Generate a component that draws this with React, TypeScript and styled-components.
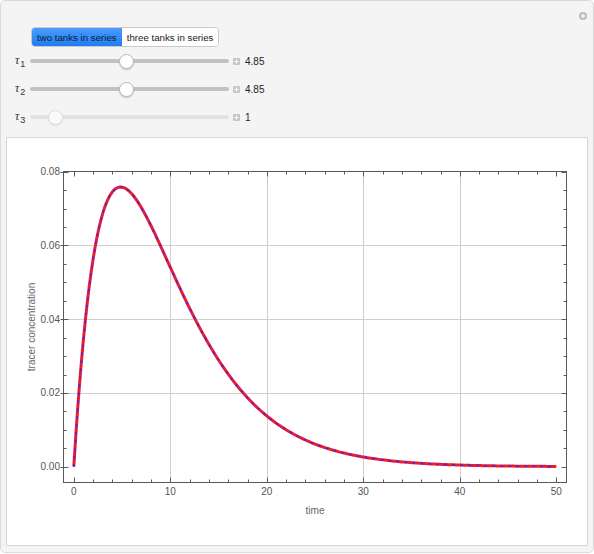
import React, { useState } from 'react';
import styled, { createGlobalStyle } from 'styled-components';

const GlobalStyle = createGlobalStyle`
  html, body {
    margin: 0;
    padding: 0;
    background: #ffffff;
  }
  body {
    font-family: "Liberation Sans", Arial, sans-serif;
  }
`;

const Outer = styled.div`
  position: relative;
  box-sizing: border-box;
  width: 594px;
  height: 553px;
  border: 1px solid #dadada;
  border-radius: 5px;
  background: #f4f4f4;
  display: flex;
  flex-direction: column;
`;

const Controls = styled.div`
  display: flex;
  flex-direction: column;
  padding-top: 26px;
`;

const TabBar = styled.div`
  display: inline-flex;
  align-self: flex-start;
  margin-left: 30px;
  height: 18px;
  border: 1px solid #c9c9c9;
  border-radius: 4px;
  overflow: hidden;
  background: #ffffff;
`;

const Tab = styled.button<{ $active: boolean }>`
  display: flex;
  align-items: center;
  border: none;
  margin: 0;
  padding: 0 5px;
  height: 100%;
  font-family: "Liberation Sans", Arial, sans-serif;
  font-size: 9.7px;
  color: ${(p) => (p.$active ? '#10203a' : '#1a1a1a')};
  background: ${(p) => (p.$active ? 'linear-gradient(180deg, #4a9cfb 0%, #1f7cf2 100%)' : '#ffffff')};
  cursor: pointer;
`;

const SliderRow = styled.div`
  display: flex;
  align-items: center;
  height: 28px;
`;

const TauLabel = styled.div`
  width: 29px;
  box-sizing: border-box;
  padding-left: 14px;
  font-family: "Liberation Serif", "Times New Roman", serif;
  font-style: italic;
  font-size: 12px;
  color: #333;
  sub {
    font-style: normal;
    font-family: "Liberation Sans", Arial, sans-serif;
    font-size: 9px;
    vertical-align: -3px;
    margin-left: 1px;
  }
`;

const Track = styled.div<{ $disabled?: boolean }>`
  position: relative;
  width: 199px;
  height: 4px;
  border-radius: 2px;
  background: ${(p) => (p.$disabled ? '#e2e2e2' : '#c2c2c2')};
`;

const Thumb = styled.div<{ $disabled?: boolean }>`
  position: absolute;
  top: 50%;
  width: 15px;
  height: 15px;
  margin-left: -7.5px;
  margin-top: -7.5px;
  box-sizing: border-box;
  border-radius: 50%;
  background: ${(p) => (p.$disabled ? '#fafafa' : '#ffffff')};
  border: 1px solid ${(p) => (p.$disabled ? '#dcdcdc' : '#b9b9b9')};
  box-shadow: 0 1px 1.5px rgba(0, 0, 0, ${(p) => (p.$disabled ? 0.08 : 0.2)});
`;

const PlusBox = styled.div`
  width: 7px;
  height: 7px;
  margin-left: 4px;
  display: flex;
  svg {
    display: block;
  }
`;

const Value = styled.div`
  margin-left: 5px;
  font-size: 10px;
  color: #222;
`;

const CornerButton = styled.div`
  position: absolute;
  top: 11px;
  right: 6px;
  width: 8px;
  height: 8px;
  svg {
    display: block;
  }
`;

const PlotPanel = styled.div`
  margin: 6px 5px 0 5px;
  width: 582px;
  height: 409px;
  box-sizing: border-box;
  border: 1px solid #d6d6d6;
  background: #ffffff;
  svg {
    display: block;
  }
`;

// plot geometry (inside the white panel)
const X0 = 66.8;
const XS = 9.65;
const Y0 = 328.7;
const YS = 3687.5;
const FL = 56.5;
const FR = 559.5;
const FT = 33.5;
const FB = 344.5;

const px = (t: number) => X0 + t * XS;
const py = (c: number) => Y0 - c * YS;

function response(t: number, tau1: number, tau2: number) {
  if (Math.abs(tau1 - tau2) < 1e-9) return (t / (tau1 * tau1)) * Math.exp(-t / tau1);
  return (Math.exp(-t / tau1) - Math.exp(-t / tau2)) / (tau1 - tau2);
}

function Plot({ tau1, tau2 }: { tau1: number; tau2: number }) {
  const pts: string[] = [];
  for (let t = 0; t <= 50.0001; t += 0.2) {
    pts.push(`${px(t).toFixed(2)},${py(response(t, tau1, tau2)).toFixed(2)}`);
  }
  const d = 'M' + pts.join(' L');

  const axis = '#5a5a5a';
  const grid = '#cfcfcf';
  const lines: JSX.Element[] = [];

  // gridlines
  [10, 20, 30, 40].forEach((t) => {
    const x = Math.round(px(t)) + 0.5;
    lines.push(<line key={'gx' + t} x1={x} x2={x} y1={FT} y2={FB} stroke={grid} />);
  });
  [0.02, 0.04, 0.06].forEach((c) => {
    const y = Math.round(py(c)) + 0.5;
    lines.push(<line key={'gy' + c} x1={FL} x2={FR} y1={y} y2={y} stroke={grid} />);
  });

  // x ticks
  for (let t = 0; t <= 50; t += 2) {
    const x = Math.round(px(t)) + 0.5;
    const len = t % 10 === 0 ? 5 : 3;
    lines.push(<line key={'bx' + t} x1={x} x2={x} y1={FB} y2={FB - len} stroke={axis} />);
    lines.push(<line key={'tx' + t} x1={x} x2={x} y1={FT} y2={FT + len} stroke={axis} />);
  }
  // y ticks
  for (let i = 0; i <= 16; i++) {
    const c = i * 0.005;
    const y = Math.round(py(c)) + 0.5;
    const major = i % 4 === 0;
    const len = major ? 5 : 3;
    lines.push(
      <line key={'ly' + i} x1={major ? FL - 3 : FL} x2={FL + len} y1={y} y2={y} stroke={axis} />
    );
    lines.push(<line key={'ry' + i} x1={FR} x2={FR - len} y1={y} y2={y} stroke={axis} />);
  }

  return (
    <svg width={580} height={407} viewBox="0 0 580 407">
      {lines}
      <rect x={FL} y={FT} width={FR - FL} height={FB - FT} fill="none" stroke={axis} />
      <path d={d} fill="none" stroke="#ec1c2e" strokeWidth={3} strokeLinejoin="round" />
      <path
        d={d}
        fill="none"
        stroke="#2a2cff"
        strokeWidth={1.6}
        strokeDasharray="2.5 5.5"
        strokeLinejoin="round"
      />
      <g fontFamily='"Liberation Sans", Arial, sans-serif' fontSize={10} fill="#555">
        {[0, 0.02, 0.04, 0.06, 0.08].map((c) => (
          <text key={'yl' + c} x={53} y={py(c) + 3.5} textAnchor="end">
            {c.toFixed(2)}
          </text>
        ))}
        {[0, 10, 20, 30, 40, 50].map((t) => (
          <text key={'xl' + t} x={px(t)} y={357} textAnchor="middle">
            {t}
          </text>
        ))}
        <text x={(FL + FR) / 2} y={376} textAnchor="middle" fill="#666">
          time
        </text>
        <text
          x={0}
          y={0}
          textAnchor="middle"
          fill="#666"
          transform={`translate(28 ${(FT + FB) / 2}) rotate(-90)`}
        >
          tracer concentration
        </text>
      </g>
    </svg>
  );
}

function PlusIcon() {
  return (
    <svg width={7} height={7} viewBox="0 0 7 7">
      <rect x={0} y={0} width={7} height={7} rx={1} fill="#c6c6c6" />
      <path d="M3.5 1.5 V5.5 M1.5 3.5 H5.5" stroke="#ffffff" strokeWidth={1.2} />
    </svg>
  );
}

interface SliderProps {
  index: number;
  value: number;
  disabled?: boolean;
}

function ParamSlider({ index, value, disabled }: SliderProps) {
  const frac = value / 10;
  const left = 7.5 + frac * (199 - 15);
  return (
    <SliderRow>
      <TauLabel>
        τ<sub>{index}</sub>
      </TauLabel>
      <Track $disabled={disabled}>
        <Thumb $disabled={disabled} style={{ left: `${left}px` }} />
      </Track>
      <PlusBox>
        <PlusIcon />
      </PlusBox>
      <Value>{value}</Value>
    </SliderRow>
  );
}

export default function App() {
  const [mode, setMode] = useState<'two' | 'three'>('two');
  const tau1 = 4.85;
  const tau2 = 4.85;

  return (
    <>
      <GlobalStyle />
      <Outer>
        <CornerButton>
          <svg width={8} height={8} viewBox="0 0 8 8">
            <circle cx={4} cy={4} r={4} fill="#bdbdbd" />
            <path d="M4 1.8 V6.2 M1.8 4 H6.2" stroke="#f4f4f4" strokeWidth={1.3} />
          </svg>
        </CornerButton>
        <Controls>
          <TabBar>
            <Tab $active={mode === 'two'} onClick={() => setMode('two')}>
              two tanks in series
            </Tab>
            <Tab $active={mode === 'three'} onClick={() => setMode('three')}>
              three tanks in series
            </Tab>
          </TabBar>
          <ParamSlider index={1} value={tau1} />
          <ParamSlider index={2} value={tau2} />
          <ParamSlider index={3} value={1} disabled={mode === 'two'} />
        </Controls>
        <PlotPanel>
          <Plot tau1={tau1} tau2={tau2} />
        </PlotPanel>
      </Outer>
    </>
  );
}
